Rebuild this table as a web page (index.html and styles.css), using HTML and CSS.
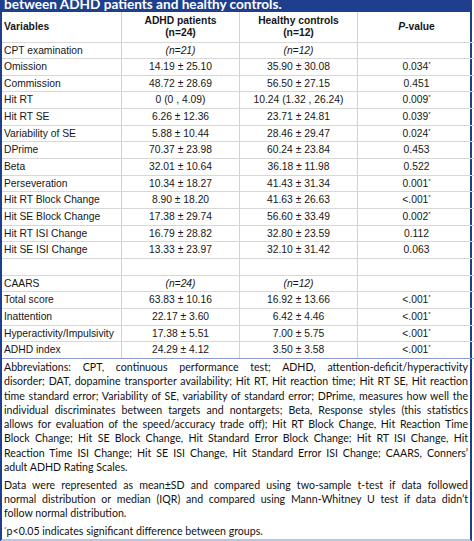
FILE: index.html
```html
<!DOCTYPE html>
<html>
<head>
<meta charset="utf-8">
<link rel="stylesheet" href="styles.css">
</head>
<body>
<div class="page">
  <div class="title"><span>between ADHD patients and healthy controls.</span></div>
  <table class="data">
    <thead>
      <tr>
        <th class="var">Variables</th>
        <th>ADHD patients<br>(n=24)</th>
        <th>Healthy controls<br>(n=12)</th>
        <th><i>P</i>-value</th>
      </tr>
    </thead>
    <tbody>
      <tr><td>CPT examination</td><td><i>(n=21)</i></td><td><i>(n=12)</i></td><td></td></tr>
      <tr><td>Omission</td><td>14.19 ± 25.10</td><td>35.90 ± 30.08</td><td>0.034<sup>*</sup></td></tr>
      <tr><td>Commission</td><td>48.72 ± 28.69</td><td>56.50 ± 27.15</td><td>0.451</td></tr>
      <tr><td>Hit RT</td><td>0 (0 , 4.09)</td><td>10.24 (1.32 , 26.24)</td><td>0.009<sup>*</sup></td></tr>
      <tr><td>Hit RT SE</td><td>6.26 ± 12.36</td><td>23.71 ± 24.81</td><td>0.039<sup>*</sup></td></tr>
      <tr><td>Variability of SE</td><td>5.88 ± 10.44</td><td>28.46 ± 29.47</td><td>0.024<sup>*</sup></td></tr>
      <tr><td>DPrime</td><td>70.37 ± 23.98</td><td>60.24 ± 23.84</td><td>0.453</td></tr>
      <tr><td>Beta</td><td>32.01 ± 10.64</td><td>36.18 ± 11.98</td><td>0.522</td></tr>
      <tr><td>Perseveration</td><td>10.34 ± 18.27</td><td>41.43 ± 31.34</td><td>0.001<sup>*</sup></td></tr>
      <tr><td>Hit RT Block Change</td><td>8.90 ± 18.20</td><td>41.63 ± 26.63</td><td>&lt;.001<sup>*</sup></td></tr>
      <tr><td>Hit SE Block Change</td><td>17.38 ± 29.74</td><td>56.60 ± 33.49</td><td>0.002<sup>*</sup></td></tr>
      <tr><td>Hit RT ISI Change</td><td>16.79 ± 28.82</td><td>32.80 ± 23.59</td><td>0.112</td></tr>
      <tr><td>Hit SE ISI Change</td><td>13.33 ± 23.97</td><td>32.10 ± 31.42</td><td>0.063</td></tr>
      <tr><td></td><td></td><td></td><td></td></tr>
      <tr><td>CAARS</td><td><i>(n=24)</i></td><td><i>(n=12)</i></td><td></td></tr>
      <tr><td>Total score</td><td>63.83 ± 10.16</td><td>16.92 ± 13.66</td><td>&lt;.001<sup>*</sup></td></tr>
      <tr><td>Inattention</td><td>22.17 ± 3.60</td><td>6.42 ± 4.46</td><td>&lt;.001<sup>*</sup></td></tr>
      <tr><td>Hyperactivity/Impulsivity</td><td>17.38 ± 5.51</td><td>7.00 ± 5.75</td><td>&lt;.001<sup>*</sup></td></tr>
      <tr class="last"><td>ADHD index</td><td>24.29 ± 4.12</td><td>3.50 ± 3.58</td><td>&lt;.001<sup>*</sup></td></tr>
    </tbody>
  </table>
  <div class="notes">
    <p>
      <span class="ln">Abbreviations: CPT, continuous performance test; ADHD, attention-deficit/hyperactivity</span>
      <span class="ln">disorder; DAT, dopamine transporter availability; Hit RT, Hit reaction time; Hit RT SE, Hit reaction</span>
      <span class="ln">time standard error; Variability of SE, variability of standard error; DPrime, measures how well the</span>
      <span class="ln">individual discriminates between targets and nontargets; Beta, Response styles (this statistics</span>
      <span class="ln">allows for evaluation of the speed/accuracy trade off); Hit RT Block Change, Hit Reaction Time</span>
      <span class="ln">Block Change; Hit SE Block Change, Hit Standard Error Block Change; Hit RT ISI Change, Hit</span>
      <span class="ln">Reaction Time ISI Change; Hit SE ISI Change, Hit Standard Error ISI Change; CAARS, Conners’</span>
      <span class="ln end">adult ADHD Rating Scales.</span>
    </p>
    <p>
      <span class="ln">Data were represented as mean±SD and compared using two-sample t-test if data followed</span>
      <span class="ln">normal distribution or median (IQR) and compared using Mann-Whitney U test if data didn’t</span>
      <span class="ln end">follow normal distribution.</span>
    </p>
    <p>
      <span class="ln end"><sup>*</sup>p&lt;0.05 indicates significant difference between groups.</span>
    </p>
  </div>
</div>
</body>
</html>
```
FILE: styles.css
```css
html, body {
  margin: 0;
  padding: 0;
  background: #ffffff;
}

.page {
  width: 468px;
  border-left: 2px solid #1e3f8e;
  border-right: 2px solid #1e3f8e;
  border-bottom: 3px solid #b9c5e2;
  color: #161616;
}

.title {
  height: 12px;
  overflow: hidden;
  background: #1e3f8e;
  margin-right: -2px;
  margin-left: -2px;
  padding-left: 4px;
}

.title span {
  display: block;
  margin-top: -2px;
  font-family: Lato, "Open Sans", sans-serif;
  font-weight: 700;
  font-size: 13.6px;
  line-height: 12px;
  color: #ffffff;
  white-space: nowrap;
}

.data {
  width: 468px;
  border-collapse: collapse;
  table-layout: fixed;
  font-family: "Liberation Sans", Arial, sans-serif;
  font-size: 10.3px;
}

.data th,
.data td {
  width: 117px;
  padding: 0;
  border-left: 1px solid #d2d2d2;
  border-bottom: 1px solid #d8d8d8;
  text-align: center;
  white-space: nowrap;
}

.data th:first-child,
.data td:first-child {
  border-left: none;
  text-align: left;
  padding-left: 2px;
}

.data th {
  font-weight: 700;
  height: 28.5px;
  line-height: 12.5px;
  padding-top: 1px;
}

.data td {
  height: 15.66px;
  line-height: 15.66px;
}

.data tr.last td {
  border-bottom: 1px solid #8b9ccc;
}

.data sup,
.notes sup {
  font-size: 6px;
  line-height: 0;
  vertical-align: 4px;
}

.notes {
  font-family: Lato, "Open Sans", sans-serif;
  font-size: 10.6px;
  line-height: 14.3px;
  padding: 1px 2px 0 2px;
  color: #111111;
}

.notes p {
  margin: 0 0 3.5px 0;
}

.notes p:last-child {
  margin-bottom: 0;
}

.ln {
  display: block;
  white-space: nowrap;
  text-align: justify;
  text-align-last: justify;
}

.ln.end {
  text-align-last: left;
}
```
